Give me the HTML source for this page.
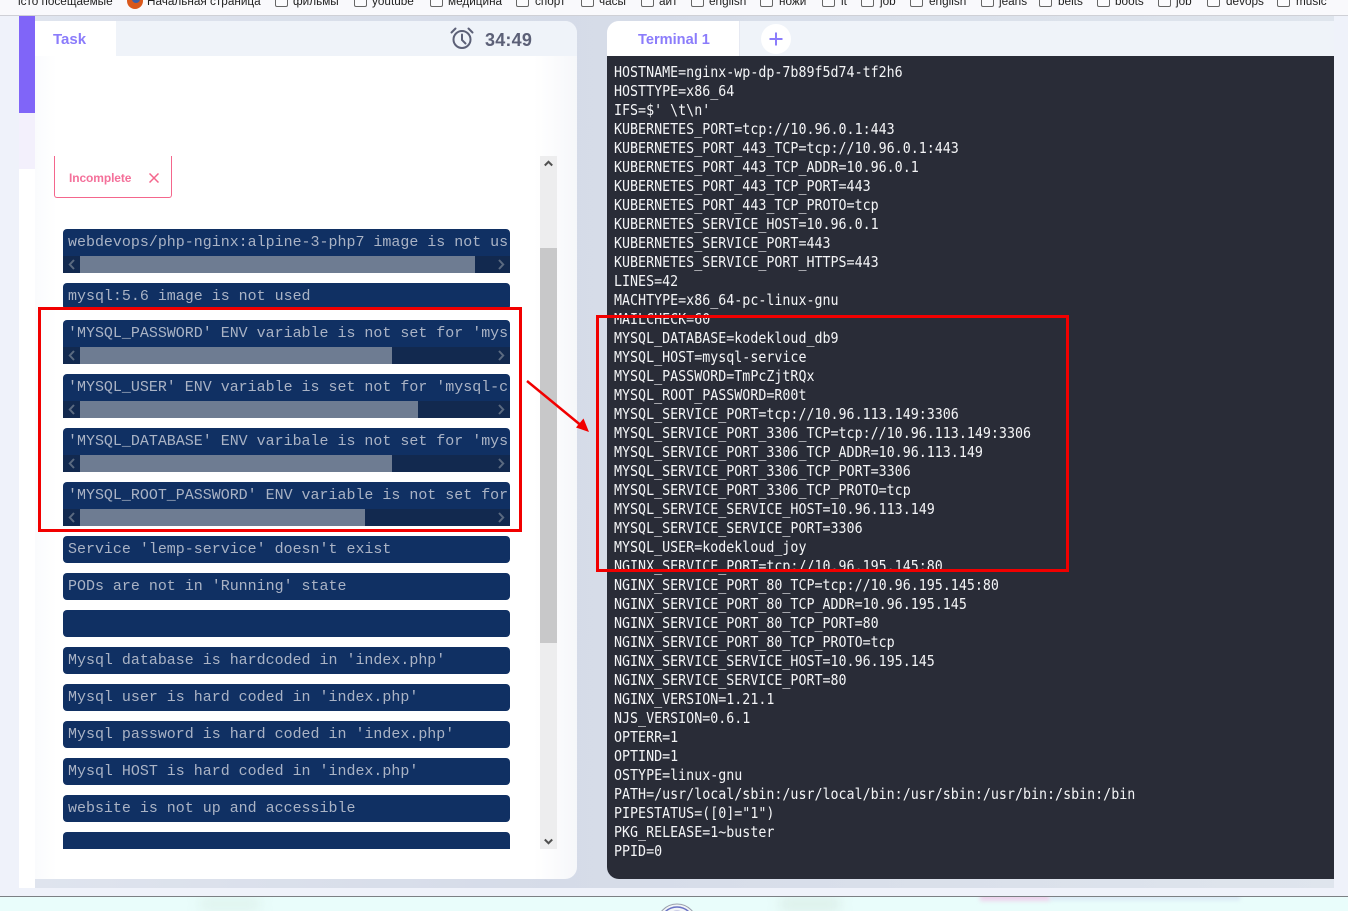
<!DOCTYPE html>
<html><head><meta charset="utf-8"><style>
html,body{margin:0;padding:0;width:1348px;height:911px;overflow:hidden;background:#eff2fa;font-family:"Liberation Sans",sans-serif}
.a{position:absolute}
.bm{position:absolute;top:-5px;font-size:11.75px;line-height:14px;color:#222;white-space:nowrap}
.cb{position:absolute;top:-6px;width:11px;height:11px;border:1px solid #666;border-radius:2px;background:#fbfbfd}
.row{position:absolute;left:63px;width:447px;background:#103063;border-radius:4px 4px 0 0;overflow:hidden;height:27px}
.row.r{border-radius:4px}
.row .t{position:absolute;left:5px;top:1px;font:14.98px/26px "Liberation Mono",monospace;color:#aab3c5;white-space:pre;width:441px;overflow:hidden;height:26px}
.row.sb{height:44px}
.tr{position:absolute;left:0;top:27px;width:447px;height:17px;background:#12294f}
.th{position:absolute;left:17px;top:0;height:17px;background:#6e7c92}
.tr svg{position:absolute;top:3px}
pre{margin:0;position:absolute;left:614px;top:62.5px;font:15px/19px "DejaVu Sans Mono",monospace;color:#f4f5f7;transform:scaleX(.888);transform-origin:0 0;white-space:pre}
</style></head><body>
<!-- bookmarks -->
<div class="a" style="left:0;top:0;width:1348px;height:15px;background:#f9f9fc;overflow:hidden">
<div class="bm" style="left:18px">істо посещаемые</div>
<svg class="a" style="left:127px;top:-7px" width="16" height="16"><circle cx="8" cy="8" r="8" fill="#d9581c"/><circle cx="9" cy="6" r="4" fill="#3a5fa8"/></svg>
<div class="bm" style="left:147px">Начальная страница</div>
<div class="cb" style="left:275px"></div><div class="bm" style="left:293px">фильмы</div>
<div class="cb" style="left:354px"></div><div class="bm" style="left:372px">youtube</div>
<div class="cb" style="left:430px"></div><div class="bm" style="left:448px">медицина</div>
<div class="cb" style="left:516px"></div><div class="bm" style="left:535px">спорт</div>
<div class="cb" style="left:581px"></div><div class="bm" style="left:599px">часы</div>
<div class="cb" style="left:641px"></div><div class="bm" style="left:659px">аит</div>
<div class="cb" style="left:691px"></div><div class="bm" style="left:709px">english</div>
<div class="cb" style="left:760px"></div><div class="bm" style="left:779px">ножи</div>
<div class="cb" style="left:822px"></div><div class="bm" style="left:841px">it</div>
<div class="cb" style="left:861px"></div><div class="bm" style="left:880px">job</div>
<div class="cb" style="left:910px"></div><div class="bm" style="left:929px">english</div>
<div class="cb" style="left:981px"></div><div class="bm" style="left:999px">jeans</div>
<div class="cb" style="left:1039px"></div><div class="bm" style="left:1058px">belts</div>
<div class="cb" style="left:1097px"></div><div class="bm" style="left:1115px">boots</div>
<div class="cb" style="left:1158px"></div><div class="bm" style="left:1176px">job</div>
<div class="cb" style="left:1207px"></div><div class="bm" style="left:1226px">devops</div>
<div class="cb" style="left:1277px"></div><div class="bm" style="left:1296px">music</div>
</div>
<div class="a" style="left:0;top:15px;width:1348px;height:1px;background:#cfd0d6"></div>
<!-- page bg -->
<div class="a" style="left:35px;top:16px;width:1299px;height:872px;background:linear-gradient(90deg,#dfe4ee 0,#d5dbe8 40%,#dfe5ed 100%)"></div>
<div class="a" style="left:19px;top:16px;width:16px;height:97px;background:#8065f8"></div>
<div class="a" style="left:19px;top:113px;width:16px;height:56px;background:#f3f0fc"></div>
<div class="a" style="left:19px;top:169px;width:16px;height:719px;background:#fff"></div>
<!-- left card -->
<div class="a" style="left:35px;top:21px;width:542px;height:858px;background:linear-gradient(90deg,#fafbfd 0,#fff 4%,#fff 92%,#f6f7fa 100%);border-radius:0 12px 12px 0"></div>
<div class="a" style="left:35px;top:21px;width:542px;height:35px;background:#eff3f9;border-radius:0 12px 0 0"></div>
<div class="a" style="left:35px;top:21px;width:81px;height:35px;background:#fff"></div>
<div class="a" style="left:53px;top:31px;font-size:15px;line-height:18px;font-weight:bold;color:#8b7cfb">Task</div>
<svg class="a" style="left:450px;top:27px" width="24" height="23" viewBox="0 0 24 23" fill="none" stroke="#5c6077" stroke-width="2"><circle cx="12" cy="12.500" r="8.500"/><path d="M12 7.500V13l3.500 3.500M1.500 5.500 5.500 1.500M22.500 5.500 18.500 1.500" stroke-linecap="round"/></svg>
<div class="a" style="left:485px;top:30px;font-size:18px;line-height:21px;font-weight:bold;color:#5c6077;letter-spacing:.2px">34:49</div>
<!-- incomplete -->
<div class="a" style="left:54px;top:156px;width:116px;height:41px;border:1px solid #f4668c;border-top:none;border-radius:0 0 3px 3px"></div>
<div class="a" style="left:69px;top:171px;font-size:12px;line-height:14px;font-weight:bold;color:#f4709a;letter-spacing:-.1px">Incomplete</div>
<svg class="a" style="left:149px;top:173px" width="10" height="10" fill="none" stroke="#f4668c" stroke-width="1.500"><path d="M.5.500 9.500 9.500M9.500.500.5 9.500"/></svg>
<!-- outer scrollbar -->
<div class="a" style="left:540px;top:156px;width:17px;height:693px;background:#ededee"></div>
<div class="a" style="left:540px;top:248px;width:17px;height:395px;background:#c8c8c9"></div>
<svg class="a" style="left:544px;top:160px" width="9" height="7" fill="none" stroke="#505050" stroke-width="2"><path d="M.8 5.500 4.500 1.800 8.200 5.500"/></svg>
<svg class="a" style="left:544px;top:838px" width="9" height="7" fill="none" stroke="#505050" stroke-width="2"><path d="M.8 1.500 4.500 5.200 8.200 1.500"/></svg>
<!-- rows -->
<div class="row sb" style="top:229px"><div class="t">webdevops/php-nginx:alpine-3-php7 image is not used</div><div class="tr"><div class="th" style="width:395px"></div><svg style="left:5px" width="7" height="11" fill="none" stroke="#5b6a80" stroke-width="2"><path d="M6 1 1.800 5.500 6 10"/></svg><svg style="left:435px" width="7" height="11" fill="none" stroke="#5b6a80" stroke-width="2"><path d="M1 1 5.200 5.500 1 10"/></svg></div></div>
<div class="row r" style="top:283px"><div class="t">mysql:5.6 image is not used</div></div>
<div class="row sb" style="top:320px"><div class="t">'MYSQL_PASSWORD' ENV variable is not set for 'mysql-container'</div><div class="tr"><div class="th" style="width:312px"></div><svg style="left:5px" width="7" height="11" fill="none" stroke="#5b6a80" stroke-width="2"><path d="M6 1 1.800 5.500 6 10"/></svg><svg style="left:435px" width="7" height="11" fill="none" stroke="#5b6a80" stroke-width="2"><path d="M1 1 5.200 5.500 1 10"/></svg></div></div>
<div class="row sb" style="top:374px"><div class="t">'MYSQL_USER' ENV variable is set not for 'mysql-container'</div><div class="tr"><div class="th" style="width:338px"></div><svg style="left:5px" width="7" height="11" fill="none" stroke="#5b6a80" stroke-width="2"><path d="M6 1 1.800 5.500 6 10"/></svg><svg style="left:435px" width="7" height="11" fill="none" stroke="#5b6a80" stroke-width="2"><path d="M1 1 5.200 5.500 1 10"/></svg></div></div>
<div class="row sb" style="top:428px"><div class="t">'MYSQL_DATABASE' ENV varibale is not set for 'mysql-container'</div><div class="tr"><div class="th" style="width:312px"></div><svg style="left:5px" width="7" height="11" fill="none" stroke="#5b6a80" stroke-width="2"><path d="M6 1 1.800 5.500 6 10"/></svg><svg style="left:435px" width="7" height="11" fill="none" stroke="#5b6a80" stroke-width="2"><path d="M1 1 5.200 5.500 1 10"/></svg></div></div>
<div class="row sb" style="top:482px"><div class="t">'MYSQL_ROOT_PASSWORD' ENV variable is not set for 'mysql-container'</div><div class="tr"><div class="th" style="width:285px"></div><svg style="left:5px" width="7" height="11" fill="none" stroke="#5b6a80" stroke-width="2"><path d="M6 1 1.800 5.500 6 10"/></svg><svg style="left:435px" width="7" height="11" fill="none" stroke="#5b6a80" stroke-width="2"><path d="M1 1 5.200 5.500 1 10"/></svg></div></div>
<div class="row r" style="top:536px"><div class="t">Service 'lemp-service' doesn't exist</div></div>
<div class="row r" style="top:573px"><div class="t">PODs are not in 'Running' state</div></div>
<div class="row r" style="top:610px"></div>
<div class="row r" style="top:647px"><div class="t">Mysql database is hardcoded in 'index.php'</div></div>
<div class="row r" style="top:684px"><div class="t">Mysql user is hard coded in 'index.php'</div></div>
<div class="row r" style="top:721px"><div class="t">Mysql password is hard coded in 'index.php'</div></div>
<div class="row r" style="top:758px"><div class="t">Mysql HOST is hard coded in 'index.php'</div></div>
<div class="row r" style="top:795px"><div class="t">website is not up and accessible</div></div>
<div class="row" style="top:832px;height:17px"></div>
<!-- right -->
<div class="a" style="left:607px;top:21px;width:727px;height:35px;background:#eff3f9;border-radius:12px 0 0 0"></div>
<div class="a" style="left:607px;top:21px;width:133px;height:35px;background:#fff;border-radius:12px 0 0 0;border-right:1px solid #e6e9f2;box-sizing:border-box"></div>
<div class="a" style="left:638px;top:31px;font-size:14.6px;line-height:18px;font-weight:bold;color:#8b7cfb">Terminal 1</div>
<div class="a" style="left:761px;top:24px;width:30px;height:30px;border-radius:50%;background:#fff"></div>
<svg class="a" style="left:769px;top:32px" width="14" height="14" stroke="#8b7cfb" stroke-width="2"><path d="M7 0.500V13.500M.5 7H13.500"/></svg>
<div class="a" style="left:607px;top:56px;width:727px;height:823px;background:#292c37;border-radius:0 0 0 12px"></div>
<pre>HOSTNAME=nginx-wp-dp-7b89f5d74-tf2h6
HOSTTYPE=x86_64
IFS=$' \t\n'
KUBERNETES_PORT=tcp://10.96.0.1:443
KUBERNETES_PORT_443_TCP=tcp://10.96.0.1:443
KUBERNETES_PORT_443_TCP_ADDR=10.96.0.1
KUBERNETES_PORT_443_TCP_PORT=443
KUBERNETES_PORT_443_TCP_PROTO=tcp
KUBERNETES_SERVICE_HOST=10.96.0.1
KUBERNETES_SERVICE_PORT=443
KUBERNETES_SERVICE_PORT_HTTPS=443
LINES=42
MACHTYPE=x86_64-pc-linux-gnu
MAILCHECK=60
MYSQL_DATABASE=kodekloud_db9
MYSQL_HOST=mysql-service
MYSQL_PASSWORD=TmPcZjtRQx
MYSQL_ROOT_PASSWORD=R00t
MYSQL_SERVICE_PORT=tcp://10.96.113.149:3306
MYSQL_SERVICE_PORT_3306_TCP=tcp://10.96.113.149:3306
MYSQL_SERVICE_PORT_3306_TCP_ADDR=10.96.113.149
MYSQL_SERVICE_PORT_3306_TCP_PORT=3306
MYSQL_SERVICE_PORT_3306_TCP_PROTO=tcp
MYSQL_SERVICE_SERVICE_HOST=10.96.113.149
MYSQL_SERVICE_SERVICE_PORT=3306
MYSQL_USER=kodekloud_joy
NGINX_SERVICE_PORT=tcp://10.96.195.145:80
NGINX_SERVICE_PORT_80_TCP=tcp://10.96.195.145:80
NGINX_SERVICE_PORT_80_TCP_ADDR=10.96.195.145
NGINX_SERVICE_PORT_80_TCP_PORT=80
NGINX_SERVICE_PORT_80_TCP_PROTO=tcp
NGINX_SERVICE_SERVICE_HOST=10.96.195.145
NGINX_SERVICE_SERVICE_PORT=80
NGINX_VERSION=1.21.1
NJS_VERSION=0.6.1
OPTERR=1
OPTIND=1
OSTYPE=linux-gnu
PATH=/usr/local/sbin:/usr/local/bin:/usr/sbin:/usr/bin:/sbin:/bin
PIPESTATUS=([0]="1")
PKG_RELEASE=1~buster
PPID=0</pre>
<!-- clipping strip for lines under the red rectangle -->
<div class="a" style="left:607px;top:570px;width:460px;height:4px;background:#292c37"></div>
<!-- bottom -->
<div class="a" style="left:0;top:896px;width:1348px;height:1px;background:#7c8084"></div>
<div class="a" style="left:0;top:897px;width:1348px;height:14px;background:#e9fdfb;overflow:hidden">
<div class="a" style="left:200px;top:0;width:60px;height:14px;background:#dff3ee;filter:blur(6px)"></div>
<div class="a" style="left:780px;top:0;width:60px;height:14px;background:#dcefe9;filter:blur(6px)"></div>
<div class="a" style="left:980px;top:-4px;width:70px;height:8px;background:#eed2ec;filter:blur(2px)"></div>
<div class="a" style="left:1050px;top:-2px;width:190px;height:5px;background:#d9e6f5;filter:blur(2px)"></div>
<svg class="a" style="left:655px;top:5px" width="44" height="20" fill="none"><circle cx="22" cy="22" r="20" stroke="#9aa0ac" fill="#f2f5f8"/><circle cx="22" cy="22" r="17" stroke="#6a74c4" stroke-width="1.500"/><circle cx="22" cy="22" r="13" stroke="#a4a9d8" fill="#dcdff5"/></svg>
</div>
<!-- red annotation -->
<div class="a" style="left:38px;top:307px;width:484px;height:225px;border:3px solid #f10000;box-sizing:border-box"></div>
<div class="a" style="left:596px;top:315px;width:473px;height:257px;border:3px solid #f10000;box-sizing:border-box"></div>
<svg class="a" style="left:520px;top:375px" width="75" height="62" fill="none"><path d="M7 6 63 52" stroke="#f10000" stroke-width="2.500"/><path d="M69 57 56 52.500 63.500 43.500Z" fill="#f10000"/></svg>
</body></html>
